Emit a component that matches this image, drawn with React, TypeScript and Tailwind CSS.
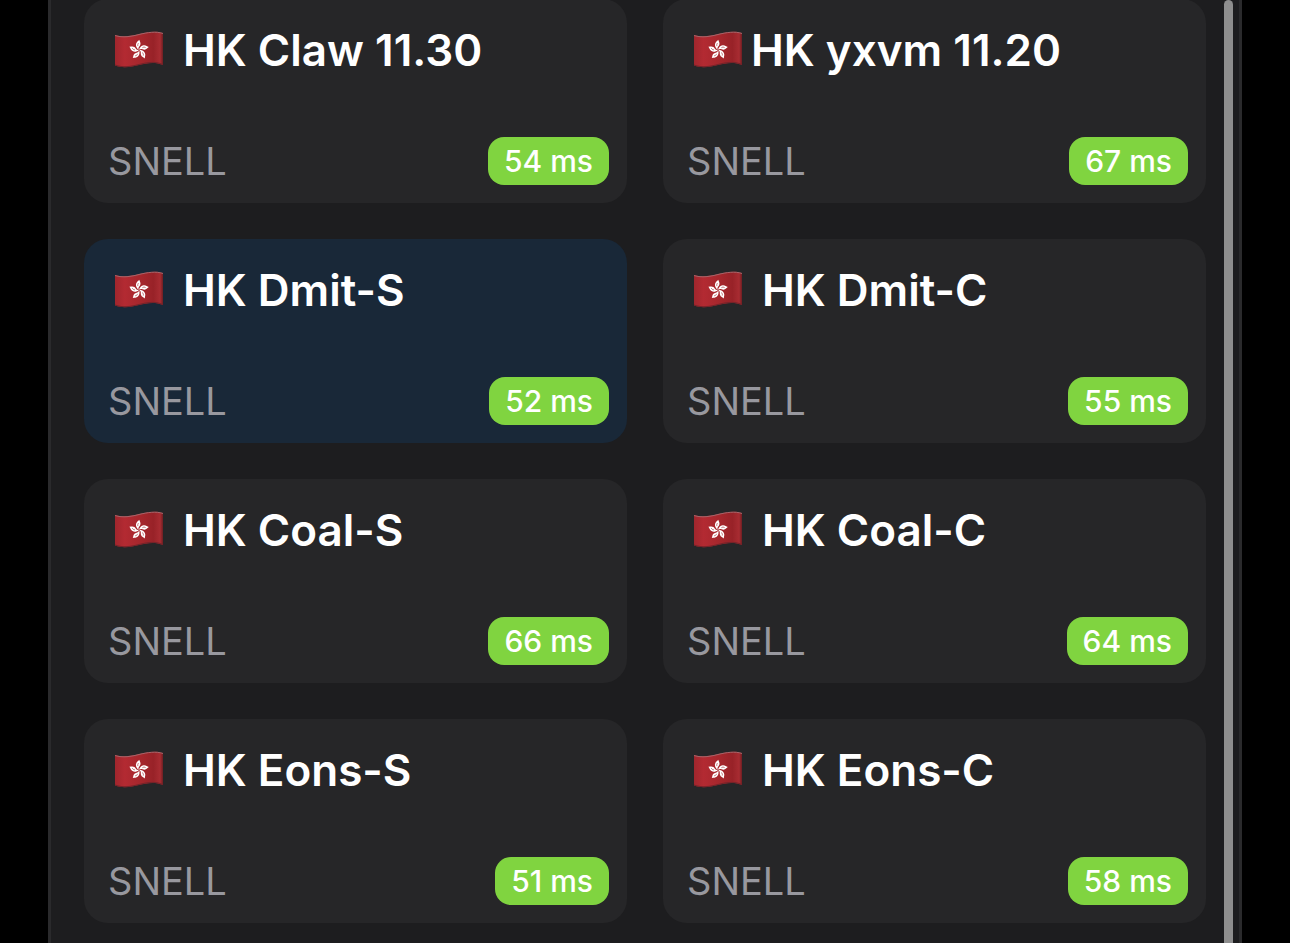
import React from "react";
import clsx from "clsx";

interface ProxyNode {
    name: string;
    type: string;
    latency: number;
    selected?: boolean;
    tight?: boolean;
}

const nodes: ProxyNode[] = [
    { name: "HK Claw 11.30", type: "SNELL", latency: 54 },
    { name: "HK yxvm 11.20", type: "SNELL", latency: 67, tight: true },
    { name: "HK Dmit-S", type: "SNELL", latency: 52, selected: true },
    { name: "HK Dmit-C", type: "SNELL", latency: 55 },
    { name: "HK Coal-S", type: "SNELL", latency: 66 },
    { name: "HK Coal-C", type: "SNELL", latency: 64 },
    { name: "HK Eons-S", type: "SNELL", latency: 51 },
    { name: "HK Eons-C", type: "SNELL", latency: 58 },
];

export default function App() {
    return (
        <div className="h-screen bg-black px-12 font-['Inter',sans-serif]">
            <div className="flex h-full overflow-hidden border-x-3 border-[#2a2a2c] bg-[#1d1d1f] pr-1.5 pl-[33px]">
                {/* Scrolled list, pinned to its lower end */}
                <main className="flex flex-1 flex-col justify-end pb-5">
                    <div className="grid grid-cols-2 gap-9">
                        {nodes.map((node) => (
                            <NodeCard key={node.name} node={node} />
                        ))}
                    </div>
                </main>

                {/* Scroll thumb */}
                <div className="ml-[18px] w-[9px] shrink-0 rounded-t-full bg-[#8e8e8e]" />
            </div>
        </div>
    );
}

function NodeCard({ node }: { node: ProxyNode }) {
    return (
        <button
            type="button"
            aria-pressed={!!node.selected}
            className={clsx(
                "flex h-[204px] flex-col justify-between rounded-3xl pt-6 pr-[18px] pb-[18px] pl-6 text-left",
                node.selected ? "bg-[#192838]" : "bg-[#262628]"
            )}
        >
            <span className={clsx("flex items-center pl-1.5", node.tight ? "gap-2" : "gap-[19px]")}>
                <HongKongFlag />
                <span className="text-[44px] leading-[54px] font-semibold whitespace-nowrap text-white">{node.name}</span>
            </span>
            <span className="flex w-full items-center justify-between">
                <span className="text-[38px] leading-12 text-[#98989f]">{node.type}</span>
                <span className="rounded-2xl bg-[#80d440] px-4 text-[30px] leading-12 font-medium text-white">
                    {node.latency} ms
                </span>
            </span>
        </button>
    );
}

function HongKongFlag() {
    return (
        <svg width="50" height="40" viewBox="0 0 50 40" className="shrink-0" aria-hidden="true">
            <defs>
                <linearGradient id="cloth" x1="0" y1="0" x2="1" y2="0">
                    <stop offset="0" stopColor="#a0262d" />
                    <stop offset="0.2" stopColor="#b32a32" />
                    <stop offset="0.55" stopColor="#a5262c" />
                    <stop offset="0.8" stopColor="#982228" />
                    <stop offset="0.94" stopColor="#a82c32" />
                    <stop offset="1" stopColor="#6e1e22" />
                </linearGradient>
            </defs>
            <path d="M1 5C9 7.500 17 6 25 4S42 .5 49 3V35C41 31.500 33 33 25 35S9 38.500 1 35.500Z" fill="url(#cloth)" />
            <path d="M1 5.500C9 8 17 6.500 25 4.500S42 1 49 3.500" fill="none" stroke="#a5656a" strokeWidth="1" />
            <path d="M1 35C9 38 17 36.500 25 34.500S41 31 49 34.500" fill="none" stroke="#742329" strokeWidth="1" />
            <g transform="translate(25 20) rotate(-2)">
                {[0, 72, 144, 216, 288].map((angle) => (
                    <g key={angle} transform={`rotate(${angle})`}>
                        <path d="M-.4 0C-1.800 -1.600 -3.400 -3.400 -2.800 -6C-2.200 -8.300 -.6 -8.700 .6 -10.200C.8 -8.800 2.300 -7.200 1.500 -5.200C.7 -3.300 -.9 -3 -.4 0Z" fill="#fff" />
                        <path d="M-1 -4C-1.400 -5.200 -.8 -6.400 0 -7" fill="none" stroke="#b96a70" strokeWidth=".9" />
                    </g>
                ))}
            </g>
        </svg>
    );
}
